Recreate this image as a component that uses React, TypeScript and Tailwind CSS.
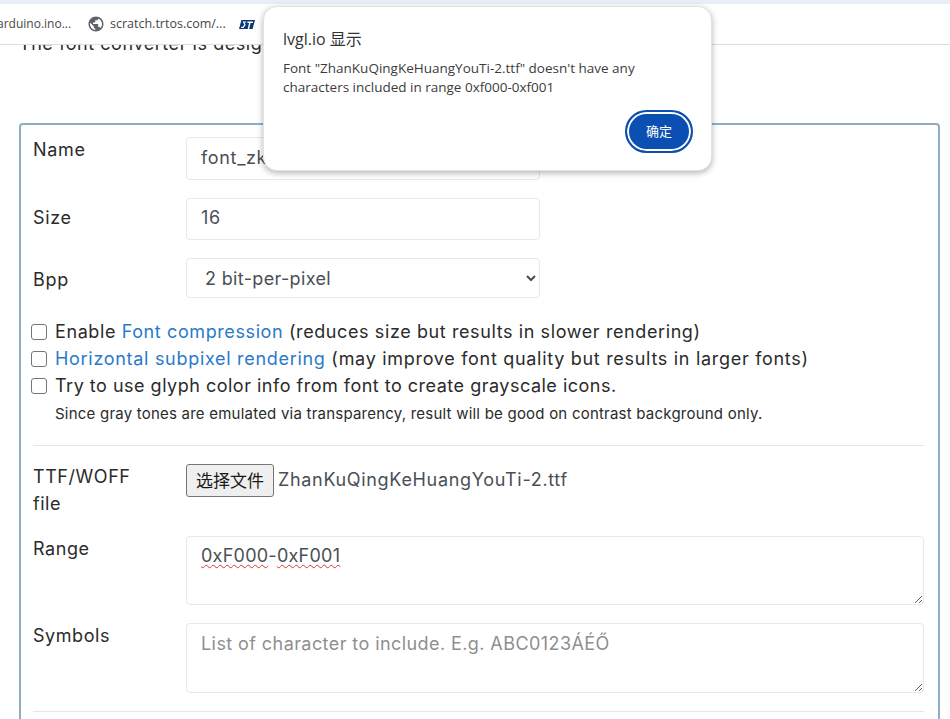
import { MdPublic } from "react-icons/md";

const body = "[font-family:'Inter','Noto_Sans_CJK_SC',sans-serif]";

function StLogo() {
  return (
    <svg width="16" height="9" viewBox="0 0 16 9" className="block" aria-hidden="true">
      <path d="M2.4 0H16L13.6 9H0Z" fill="#0a3a75" />
      <path d="M7.2 2H4.6L6 4.6L4.2 7.4H2.2" fill="none" stroke="#fff" strokeWidth="1.2" />
      <path d="M8.4 2.2H14M11 2.2L9.4 9" fill="none" stroke="#fff" strokeWidth="1.4" />
    </svg>
  );
}

function Check({ children, mt, track }: { children: React.ReactNode; mt?: string; track: string }) {
  return (
    <div className={`flex h-[27px] items-center ${mt ?? ""}`}>
      <span className="ml-[10px] mr-[8px] h-4 w-4 shrink-0 rounded-[3px] border border-[#767676] bg-white" />
      <span className={`whitespace-nowrap ${track}`}>{children}</span>
    </div>
  );
}

export default function App() {
  return (
    <div className={`relative flex h-[719px] w-[950px] flex-col overflow-hidden bg-white text-[18px] text-[#2b2b2b] ${body}`}>
      <div className="h-1 shrink-0 bg-[#e9edf7]" />
      <div className="relative z-10 flex h-[41px] shrink-0 items-center overflow-hidden border-b border-[#dcdee2] bg-white text-[12.5px] text-[#45474a] [font-family:'Open_Sans',sans-serif]">
        <span className="ml-[-3px] w-[74px] whitespace-nowrap text-[12px]">arduino.ino...</span>
        <MdPublic className="ml-[16px] text-[#5f6368]" size={18} />
        <span className="ml-[5px] whitespace-nowrap">scratch.trtos.com/...</span>
        <span className="ml-[13px]"><StLogo /></span>
      </div>

      <p className="ml-[19px] mt-[-15px] h-[34px] whitespace-nowrap leading-[27px] tracking-[0.55px]">
        The font converter is designed to be used with LVGL.
      </p>

      <form className="mx-[19px] mt-[66px] w-[921px] shrink-0 rounded-[4px] border-2 border-[#8eaec6] pl-[12px] pr-[14px] pt-[10px] tracking-[0.67px]">
        <div className="flex h-[63px]">
          <label className="w-[153px] pt-[1px] leading-[27px]">Name</label>
          <input readOnly value="font_zk" className="mt-[2px] h-[43px] w-[354px] rounded-[4px] border border-[#e8e8e8] px-[14px] pb-[3px] text-[#4a4f55] outline-none" />
        </div>
        <div className="flex h-[60px]">
          <label className="w-[153px] pt-[6px] leading-[27px]">Size</label>
          <input readOnly value="16" className="h-[42px] w-[354px] rounded-[4px] border border-[#e8e8e8] px-[14px] pb-[3px] text-[#4a4f55] outline-none" />
        </div>
        <div className="flex h-[57px]">
          <label className="w-[153px] pt-[8px] leading-[27px]">Bpp</label>
          <select className="h-[40px] w-[354px] rounded-[4px] border border-[#e8e8e8] bg-white px-[14px] tracking-[0.35px] text-[#4a4f55] outline-none">
            <option>2 bit-per-pixel</option>
          </select>
        </div>

        <div className="ml-[-12px]">
          <Check mt="mt-[3px]" track="tracking-[0.6px]">
            Enable <a className="text-[#2a7ac9]">Font compression</a> (reduces size but results in slower rendering)
          </Check>
          <Check track="tracking-[0.7px]">
            <a className="text-[#2a7ac9]">Horizontal subpixel rendering</a> (may improve font quality but results in larger fonts)
          </Check>
          <Check track="tracking-[0.5px]">Try to use glyph color info from font to create grayscale icons.</Check>
        </div>
        <p className="mt-[4px] ml-[22px] whitespace-nowrap text-[15px] leading-[22px] tracking-[0.22px]">
          Since gray tones are emulated via transparency, result will be good on contrast background only.
        </p>

        <hr className="mt-[20px] border-[#e6e6e6]" />

        <div className="mt-[17px] flex h-[73px]">
          <label className="w-[153px] leading-[27px] tracking-[0.55px]">TTF/WOFF<br />file</label>
          <div className="flex h-[34px] items-center">
            <button type="button" className="h-[33px] w-[88px] rounded-[3px] border border-[#767676] bg-[#efefef] text-[17px] tracking-normal text-[#1a1a1a] [font-family:'Noto_Sans_CJK_SC',sans-serif]">选择文件</button>
            <span className="ml-[4px] pb-[2px] text-[#4a4f55]">ZhanKuQingKeHuangYouTi-2.ttf</span>
          </div>
        </div>

        <div className="flex h-[87px]">
          <label className="mt-[-1px] w-[153px] leading-[27px] tracking-[0.55px]">Range</label>
          <div className="relative h-[69px] w-[738px] tracking-[0.25px]">
            <textarea readOnly spellCheck={false} value="0xF000-0xF001" className="h-full w-full rounded-[4px] border border-[#e8e8e8] px-[14px] py-[5px] leading-[27px] text-[#4a4f55] outline-none" />
            <div className="pointer-events-none absolute left-[15px] top-[6px] flex leading-[27px] text-transparent">
              <span className="underline decoration-[#d0393a] decoration-wavy decoration-1 underline-offset-2">0xF000</span>
              <span>-</span>
              <span className="underline decoration-[#d0393a] decoration-wavy decoration-1 underline-offset-2">0xF001</span>
            </div>
          </div>
        </div>

        <div className="flex h-[88px]">
          <label className="mt-[-1px] w-[153px] leading-[27px] tracking-[0.55px]">Symbols</label>
          <textarea readOnly placeholder="List of character to include. E.g. ABC0123ÁÉŐ" className="h-[70px] w-[738px] rounded-[4px] border border-[#e8e8e8] px-[14px] py-[6px] leading-[27px] tracking-[0.42px] text-[#4a4f55] outline-none placeholder:text-[#8f8f8f]" />
        </div>

        <hr className="border-[#e6e6e6]" />
        <div className="h-10" />
      </form>

      <div className="absolute left-[263px] top-[6px] z-20 h-[165px] w-[449px] rounded-[14px] border border-[#e3e3e3] bg-white px-[19px] pt-[22px] shadow-[0_2px_6px_rgba(0,0,0,0.3)] [font-family:'Open_Sans','Noto_Sans_CJK_SC',sans-serif]">
        <h2 className="text-[16px] leading-[20px] text-[#333]">lvgl.io 显示</h2>
        <p className="mt-[10px] whitespace-nowrap text-[13.5px] leading-[19px] text-[#3c3c3c]">
          Font "ZhanKuQingKeHuangYouTi-2.ttf" doesn't have any<br />characters included in range 0xf000-0xf001
        </p>
        <div className="mt-[13px] flex justify-end">
          <button type="button" className="mr-[-1px] flex h-[43px] w-[68px] items-center justify-center rounded-full border-2 border-[#0b4fb3] bg-[#0b4fb3] text-[13px] text-white shadow-[inset_0_0_0_2px_#fff]">确定</button>
        </div>
      </div>
    </div>
  );
}
